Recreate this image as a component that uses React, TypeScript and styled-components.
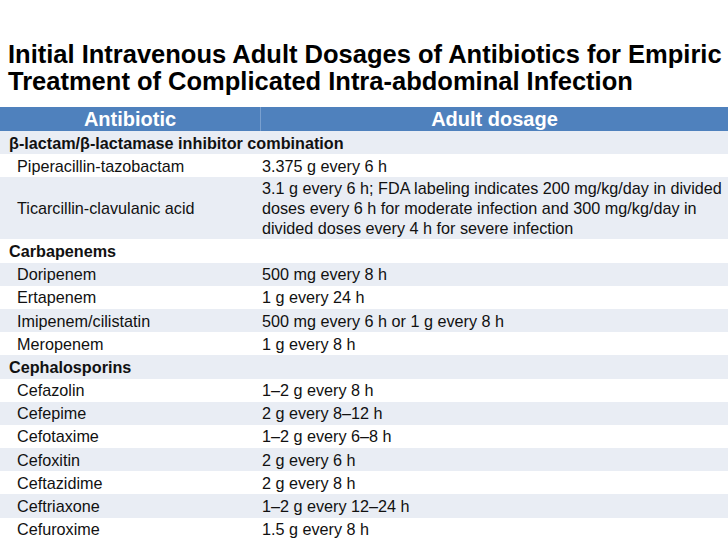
import React from "react";
import styled, { createGlobalStyle } from "styled-components";

type Drug = { name: string; dose: React.ReactNode };
type Group = { title: string; drugs: Drug[] };

const groups: Group[] = [
  {
    title: "β-lactam/β-lactamase inhibitor combination",
    drugs: [
      { name: "Piperacillin-tazobactam", dose: "3.375 g every 6 h" },
      {
        name: "Ticarcillin-clavulanic acid",
        dose: (
          <>
            3.1 g every 6 h; FDA labeling indicates 200 mg/kg/day in divided
            <br />
            doses every 6 h for moderate infection and 300 mg/kg/day in
            <br />
            divided doses every 4 h for severe infection
          </>
        ),
      },
    ],
  },
  {
    title: "Carbapenems",
    drugs: [
      { name: "Doripenem", dose: "500 mg every 8 h" },
      { name: "Ertapenem", dose: "1 g every 24 h" },
      { name: "Imipenem/cilistatin", dose: "500 mg every 6 h or 1 g every 8 h" },
      { name: "Meropenem", dose: "1 g every 8 h" },
    ],
  },
  {
    title: "Cephalosporins",
    drugs: [
      { name: "Cefazolin", dose: "1–2 g every 8 h" },
      { name: "Cefepime", dose: "2 g every 8–12 h" },
      { name: "Cefotaxime", dose: "1–2 g every 6–8 h" },
      { name: "Cefoxitin", dose: "2 g every 6 h" },
      { name: "Ceftazidime", dose: "2 g every 8 h" },
      { name: "Ceftriaxone", dose: "1–2 g every 12–24 h" },
      { name: "Cefuroxime", dose: "1.5 g every 8 h" },
    ],
  },
];

const GlobalStyle = createGlobalStyle`
  html, body {
    margin: 0;
    padding: 0;
    background: #ffffff;
  }
`;

const Slide = styled.div`
  width: 728px;
  height: 546px;
  overflow: hidden;
  background: #ffffff;
  font-family: "Liberation Sans", Arial, sans-serif;
  color: #111111;
`;

const Title = styled.h1`
  margin: 0;
  padding: 41px 0 12px 8px;
  font-family: "Liberation Sans", Arial, sans-serif;
  font-weight: bold;
  font-size: 25.5px;
  line-height: 27px;
  white-space: nowrap;
  color: #000000;
`;

const Table = styled.div`
  display: flex;
  flex-direction: column;
`;

const HeaderRow = styled.div`
  display: grid;
  grid-template-columns: 260px 1fr;
  height: 24px;
  background: #4f81bd;
  color: #ffffff;
  font-weight: bold;
  font-size: 20px;
  line-height: 24px;
`;

const HeaderCell = styled.div<{ $divider?: boolean }>`
  text-align: center;
  border-left: ${({ $divider }) => ($divider ? "1px solid #7aa0cf" : "none")};
`;

const Row = styled.div<{ $shaded: boolean }>`
  display: grid;
  grid-template-columns: 260px 1fr;
  align-items: center;
  min-height: 23.2px;
  background: ${({ $shaded }) => ($shaded ? "#e9edf4" : "#ffffff")};
  font-size: 16.2px;
  line-height: 20px;
`;

const GroupCell = styled.div`
  grid-column: 1 / span 2;
  padding-left: 9px;
  font-weight: bold;
`;

const NameCell = styled.div`
  padding-left: 17px;
`;

const DoseCell = styled.div<{ $multi?: boolean }>`
  padding: ${({ $multi }) => ($multi ? "1px 0 1px 2px" : "0 0 0 2px")};
  white-space: nowrap;
`;

export default function App() {
  let index = 0;
  const rows: React.ReactNode[] = [];

  groups.forEach((g) => {
    rows.push(
      <Row key={g.title} $shaded={index % 2 === 0}>
        <GroupCell>{g.title}</GroupCell>
      </Row>
    );
    index++;
    g.drugs.forEach((d) => {
      rows.push(
        <Row key={d.name} $shaded={index % 2 === 0}>
          <NameCell>{d.name}</NameCell>
          <DoseCell $multi={typeof d.dose !== "string"}>{d.dose}</DoseCell>
        </Row>
      );
      index++;
    });
  });

  return (
    <Slide>
      <GlobalStyle />
      <Title>
        Initial Intravenous Adult Dosages of Antibiotics for Empiric
        <br />
        Treatment of Complicated Intra-abdominal Infection
      </Title>
      <Table>
        <HeaderRow>
          <HeaderCell>Antibiotic</HeaderCell>
          <HeaderCell $divider>Adult dosage</HeaderCell>
        </HeaderRow>
        {rows}
      </Table>
    </Slide>
  );
}
